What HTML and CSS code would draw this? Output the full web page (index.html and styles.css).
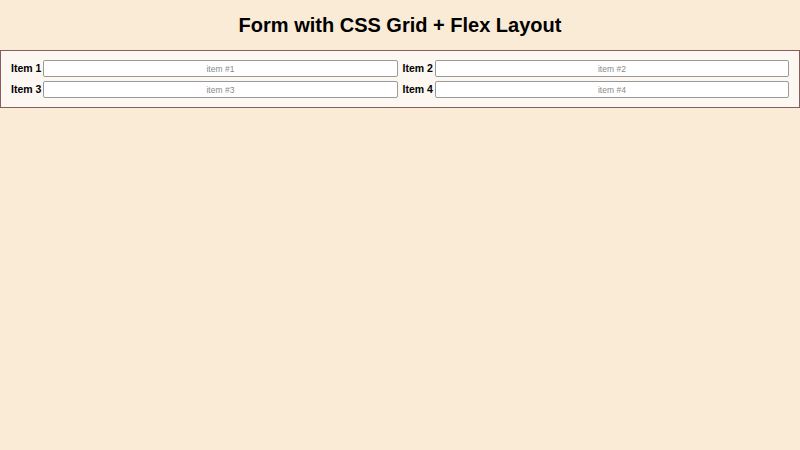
FILE: index.html
```html
<!DOCTYPE html>
<html>
<head>
<meta charset="utf-8">
<link rel="stylesheet" href="styles.css">
</head>
<body>
<h1 class="title">Form with CSS Grid + Flex Layout</h1>
<form class="grid-form">
  <div class="field"><label class="label">Item 1</label><input class="input" placeholder="item #1"></div>
  <div class="field"><label class="label">Item 2</label><input class="input" placeholder="item #2"></div>
  <div class="field"><label class="label">Item 3</label><input class="input" placeholder="item #3"></div>
  <div class="field"><label class="label">Item 4</label><input class="input" placeholder="item #4"></div>
</form>
</body>
</html>
```
FILE: styles.css
```css
html, body {
  margin: 0;
  padding: 0;
  background: #faebd7;
  font-family: "Liberation Sans", Arial, sans-serif;
  color: #000;
}
.title {
  margin: 14px 0 13px;
  font-size: 20px;
  line-height: 23px;
  font-weight: bold;
  text-align: center;
}
.grid-form {
  display: grid;
  grid-template-columns: 1fr 1fr;
  column-gap: 5px;
  row-gap: 4px;
  padding: 9px 10px;
  border: 1px solid #8b5c5c;
  background: #fdf7f1;
}
.field {
  display: flex;
  align-items: center;
  gap: 2px;
}
.label {
  font-size: 10.5px;
  line-height: 12px;
  padding-bottom: 1px;
  font-weight: bold;
}
.input {
  flex: 1;
  min-width: 0;
  box-sizing: border-box;
  height: 17px;
  margin: 0;
  padding: 0 4px;
  border: 1px solid #9a9a9a;
  border-radius: 2px;
  background: #fff;
  font-family: "Liberation Sans", Arial, sans-serif;
  font-size: 8.5px;
  text-align: center;
}
.input::placeholder {
  color: #8a8a8a;
}
```
